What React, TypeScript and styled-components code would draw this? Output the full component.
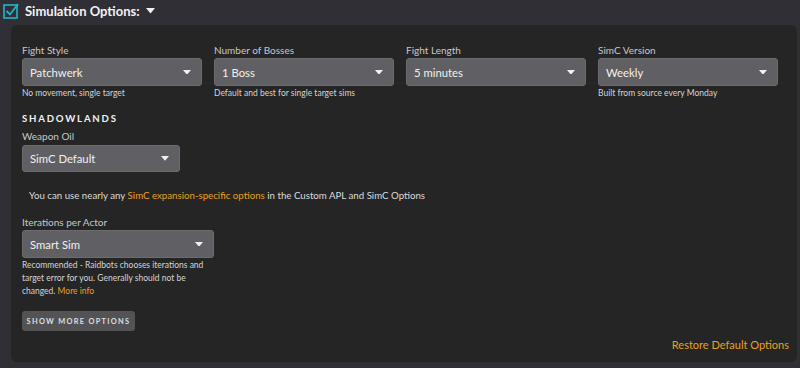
import React from 'react';
import styled, { createGlobalStyle } from 'styled-components';

const GlobalStyle = createGlobalStyle`
	html, body {
		margin: 0;
		padding: 0;
		background: #2f2f35;
		font-family: Lato, "Open Sans", sans-serif;
		color: #e6e6e6;
	}
`;

const Page = styled.div`
	width: 800px;
	height: 368px;
	box-sizing: border-box;
	padding: 3px 3px 0 3px;
	display: flex;
	flex-direction: column;
	overflow: hidden;
`;

const Header = styled.div`
	display: flex;
	align-items: center;
	height: 16px;
	gap: 6px;
`;

const Title = styled.span`
	font-size: 13px;
	font-weight: 700;
	color: #f2f2f2;
`;

const Panel = styled.div`
	margin: 6px 0 0 8px;
	background: #252525;
	border-radius: 6px;
	padding: 19px 8px 10px 11px;
	height: 337px;
	box-sizing: border-box;
	display: flex;
	flex-direction: column;
`;

const Row = styled.div`
	display: grid;
	grid-template-columns: repeat(4, 180px);
	column-gap: 12px;
`;

const Field = styled.div<{ $width?: number; $top?: number }>`
	display: flex;
	flex-direction: column;
	width: ${(p) => (p.$width ? `${p.$width}px` : 'auto')};
	margin-top: ${(p) => p.$top ?? 0}px;
`;

const Label = styled.div<{ $gap?: number }>`
	font-size: 10px;
	color: #c8c8c8;
	line-height: 12px;
	margin-bottom: ${(p) => p.$gap ?? 2}px;
`;

const Select = styled.div<{ $height?: number }>`
	height: ${(p) => p.$height ?? 28}px;
	box-sizing: border-box;
	background: #606064;
	border: 1px solid #6c6c70;
	border-radius: 3px;
	display: flex;
	align-items: center;
	justify-content: space-between;
	padding: 0 10px 0 7px;
	font-size: 11.3px;
	color: #f0f0f0;
`;

const Help = styled.div<{ $top?: number }>`
	font-size: 8.5px;
	line-height: 13px;
	color: #d4d4d4;
	margin-top: ${(p) => p.$top ?? 0}px;
`;

const Section = styled.div`
	font-size: 9.6px;
	font-weight: 700;
	letter-spacing: 1.8px;
	color: #f2f2f2;
	margin-top: 13px;
	line-height: 12px;
`;

const Note = styled.div`
	font-size: 9.7px;
	color: #dcdcdc;
	padding-left: 7px;
	margin-top: 17px;
	line-height: 12px;
`;

const Link = styled.a`
	color: #e8a020;
	text-decoration: none;
`;

const MoreButton = styled.div`
	align-self: flex-start;
	flex-shrink: 0;
	margin-top: 13px;
	background: #535356;
	border-radius: 3px;
	width: 113px;
	box-sizing: border-box;
	height: 20px;
	display: flex;
	align-items: center;
	justify-content: center;
	font-size: 7.4px;
	font-weight: 700;
	letter-spacing: 1.3px;
	color: #dedede;
`;

const Footer = styled.div`
	margin-top: auto;
	display: flex;
	justify-content: flex-end;
	font-size: 11px;
	line-height: 14px;
`;

const Caret = ({ size = 8, color = '#f0f0f0' }: { size?: number; color?: string }) => (
	<svg width={size} height={size * 0.6} viewBox="0 0 10 6">
		<path d="M0 0 L10 0 L5 6 Z" fill={color} />
	</svg>
);

const CheckBox = () => (
	<svg width="16" height="16" viewBox="0 0 16 16">
		<rect x="1" y="2" width="13" height="13" fill="none" stroke="#22b5cc" strokeWidth="1.6" />
		<path d="M3.5 8 L7 11.5 L15 1" fill="none" stroke="#22b5cc" strokeWidth="1.8" />
	</svg>
);

const Dropdown = ({ value, height }: { value: string; height?: number }) => (
	<Select $height={height}>
		<span>{value}</span>
		<Caret />
	</Select>
);

const topFields = [
	{ label: 'Fight Style', value: 'Patchwerk', help: 'No movement, single target' },
	{ label: 'Number of Bosses', value: '1 Boss', help: 'Default and best for single target sims' },
	{ label: 'Fight Length', value: '5 minutes', help: '' },
	{ label: 'SimC Version', value: 'Weekly', help: 'Built from source every Monday' },
];

export default function App() {
	return (
		<>
			<GlobalStyle />
			<Page>
				<Header>
					<CheckBox />
					<Title>Simulation Options:</Title>
					<Caret size={9} />
				</Header>
				<Panel>
					<Row>
						{topFields.map((f) => (
							<Field key={f.label}>
								<Label>{f.label}</Label>
								<Dropdown value={f.value} />
								{f.help && <Help $top={1}>{f.help}</Help>}
							</Field>
						))}
					</Row>
					<Section>SHADOWLANDS</Section>
					<Field $width={158} $top={5}>
						<Label $gap={3}>Weapon Oil</Label>
						<Dropdown value="SimC Default" height={27} />
					</Field>
					<Note>
						You can use nearly any <Link>SimC expansion-specific options</Link> in the Custom APL and SimC Options
					</Note>
					<Field $width={192} $top={15}>
						<Label>Iterations per Actor</Label>
						<Dropdown value="Smart Sim" />
						<Help $top={1}>
							Recommended - Raidbots chooses iterations and target error for you. Generally should not be
							changed. <Link>More info</Link>
						</Help>
					</Field>
					<MoreButton>SHOW MORE OPTIONS</MoreButton>
					<Footer>
						<Link>Restore Default Options</Link>
					</Footer>
				</Panel>
			</Page>
		</>
	);
}
